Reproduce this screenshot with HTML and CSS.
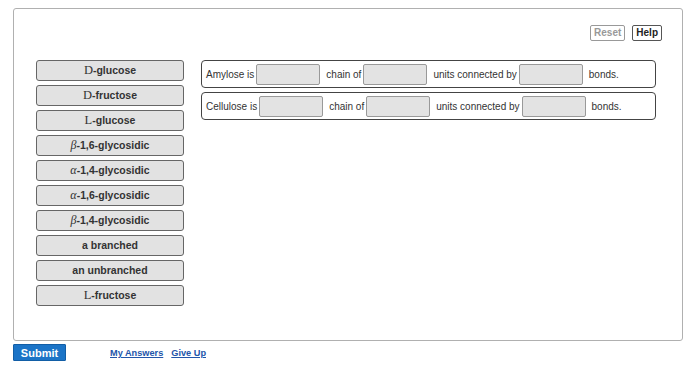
FILE: index.html
```html
<!DOCTYPE html>
<html>
<head>
  <meta charset="UTF-8">
  <title>Carbohydrate Labels</title>
  <link rel="stylesheet" href="styles.css">
</head>
<body>
  <div class="panel">
    <div class="toolbar">
      <button class="tool-btn reset">Reset</button>
      <button class="tool-btn">Help</button>
    </div>

    <div class="workspace">
      <div class="labels">
        <div class="label"><span class="m">D</span>-glucose</div>
        <div class="label"><span class="m">D</span>-fructose</div>
        <div class="label"><span class="m">L</span>-glucose</div>
        <div class="label"><span class="mi">β</span>-1,6-glycosidic</div>
        <div class="label"><span class="mi">α</span>-1,4-glycosidic</div>
        <div class="label"><span class="mi">α</span>-1,6-glycosidic</div>
        <div class="label"><span class="mi">β</span>-1,4-glycosidic</div>
        <div class="label">a branched</div>
        <div class="label">an unbranched</div>
        <div class="label"><span class="m">L</span>-fructose</div>
      </div>

      <div class="sentences">
        <div class="sentence">
          <span>Amylose is</span><span class="slot"></span>
          <span>chain of</span><span class="slot"></span>
          <span>units connected by</span><span class="slot"></span>
          <span>bonds.</span>
        </div>
        <div class="sentence">
          <span>Cellulose is</span><span class="slot"></span>
          <span>chain of</span><span class="slot"></span>
          <span>units connected by</span><span class="slot"></span>
          <span>bonds.</span>
        </div>
      </div>
    </div>
  </div>

  <div class="footer">
    <button class="submit">Submit</button>
    <a href="#" class="link first">My Answers</a>
    <a href="#" class="link">Give Up</a>
  </div>
</body>
</html>
```

FILE: styles.css
```css
body {
  margin: 0;
  font-family: "Liberation Sans", Arial, sans-serif;
  font-size: 11px;
  color: #333;
  background: #fff;
}
.panel {
  margin: 8px 0 0 13px;
  width: 668px;
  height: 331px;
  border: 1px solid #b0b0b0;
  border-radius: 3px;
}
.toolbar {
  display: flex;
  justify-content: flex-end;
  gap: 7px;
  padding: 16px 20px 0 0;
}
.tool-btn {
  font-family: "Liberation Sans", Arial, sans-serif;
  font-size: 10px;
  font-weight: bold;
  color: #222;
  background: #fff;
  border: 1px solid #555;
  border-radius: 2px;
  height: 16px;
  padding: 0 3px;
  line-height: 14px;
}
.tool-btn.reset {
  color: #999;
  border-color: #999;
}
.workspace {
  display: flex;
  gap: 17px;
  padding: 19px 0 0 22px;
}
.labels {
  display: flex;
  flex-direction: column;
  gap: 4px;
  width: 148px;
}
.label {
  height: 19px;
  line-height: 19px;
  background: #e2e2e2;
  border: 1px solid #666;
  border-radius: 3px;
  text-align: center;
  font-weight: bold;
  color: #333;
  font-size: 10.5px;
}
.m {
  font-family: "Liberation Serif", "Times New Roman", serif;
  font-weight: normal;
  font-size: 12.5px;
}
.mi {
  font-family: "Liberation Serif", "Times New Roman", serif;
  font-style: italic;
  font-weight: normal;
  font-size: 12px;
}
.sentences {
  display: flex;
  flex-direction: column;
  gap: 4px;
  width: 455px;
}
.sentence {
  display: flex;
  align-items: center;
  height: 26px;
  padding-left: 4px;
  border: 1px solid #444;
  border-radius: 4px;
  color: #333;
  font-size: 10px;
}
.slot {
  width: 62px;
  height: 19px;
  margin: 0 6px 0 2px;
  background: #e3e3e3;
  border: 1px solid #999;
  border-radius: 2px;
}
.footer {
  display: flex;
  align-items: center;
  margin: 3px 0 0 13px;
}
.submit {
  width: 53px;
  height: 17px;
  background: #1b74c7;
  color: #fff;
  border: 1px solid #125ea6;
  border-radius: 1px;
  font-family: "Liberation Sans", Arial, sans-serif;
  font-weight: bold;
  font-size: 11px;
  padding: 0;
}
.link {
  color: #2255aa;
  font-weight: bold;
  font-size: 9.2px;
  margin-left: 8px;
}
.link.first {
  margin-left: 44px;
}
```
